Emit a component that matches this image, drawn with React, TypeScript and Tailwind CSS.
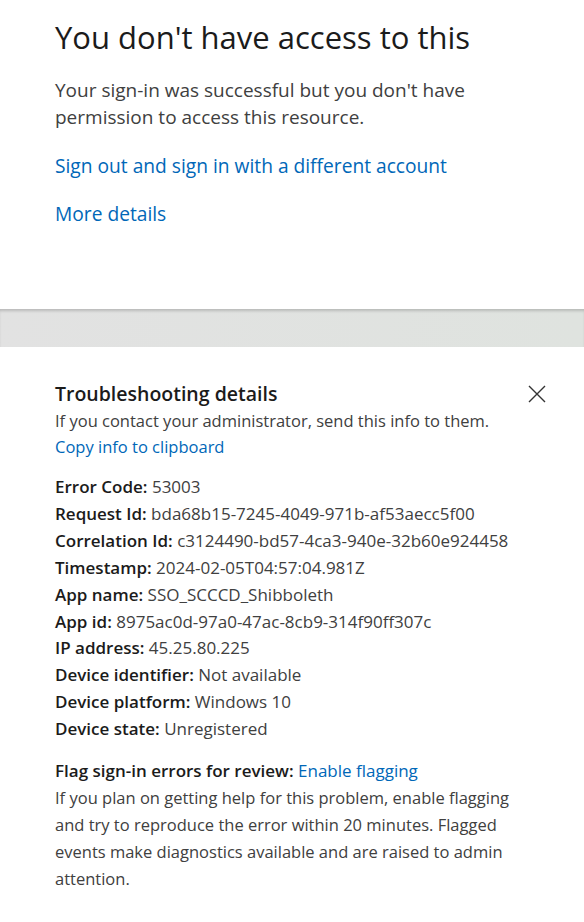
import * as React from "react";

const details: [string, string][] = [
	["Error Code:", "53003"],
	["Request Id:", "bda68b15-7245-4049-971b-af53aecc5f00"],
	["Correlation Id:", "c3124490-bd57-4ca3-940e-32b60e924458"],
	["Timestamp:", "2024-02-05T04:57:04.981Z"],
	["App name:", "SSO_SCCCD_Shibboleth"],
	["App id:", "8975ac0d-97a0-47ac-8cb9-314f90ff307c"],
	["IP address:", "45.25.80.225"],
	["Device identifier:", "Not available"],
	["Device platform:", "Windows 10"],
	["Device state:", "Unregistered"],
];

export default function App() {
	return (
		<div className="w-[584px] h-[922px] overflow-hidden bg-white font-['Segoe_UI','Open_Sans',sans-serif]">
			{/* Main card */}
			<div className="h-[309px] pl-[55px] pr-6 pt-[15px]">
				<h1 className="text-[31px] leading-[45px] font-medium text-[#1b1b1b]">
					You don't have access to this
				</h1>
				<p className="mt-[17px] text-[19px] leading-[27px] text-[#404040]">
					Your sign-in was successful but you don't have permission to access
					this resource.
				</p>
				<div className="mt-[21px] text-[19.2px] leading-[28px] text-[#0067b8]">
					Sign out and sign in with a different account
				</div>
				<div className="mt-[20px] text-[19.2px] leading-[28px] text-[#0067b8]">
					More details
				</div>
			</div>

			{/* Backdrop strip */}
			<div className="h-[38px] bg-gradient-to-r from-[#e2e2e2] to-[#dfe3df] shadow-[inset_0_3px_3px_-1px_rgba(0,0,0,0.18)]" />

			{/* Troubleshooting panel */}
			<div className="pl-[55px] pr-[38px] pt-[34px] text-[#1b1b1b]">
				<div className="flex items-start justify-between">
					<div className="text-[19.5px] leading-[26px] font-semibold">
						Troubleshooting details
					</div>
					<svg
						width="18"
						height="18"
						viewBox="0 0 18 18"
						className="mt-[4px]"
						fill="none"
						stroke="#333"
						strokeWidth="1.4"
					>
						<path d="M1 1L17 17M17 1L1 17" />
					</svg>
				</div>
				<div className="text-[16.5px] leading-[27px] text-[#404040]">
					If you contact your administrator, send this info to them.
				</div>
				<div className="-mt-[1px] text-[16.5px] leading-[27px] text-[#0067b8]">
					Copy info to clipboard
				</div>

				<div className="mt-[14px] text-[17px]">
					{details.map(([k, v]) => (
						<div key={k} className="leading-[26.9px] text-[#404040]">
							<span className="font-semibold text-[#1b1b1b]">{k}</span> {v}
						</div>
					))}
				</div>

				<div className="mt-[14px] text-[17px] leading-[27px]">
					<span className="font-semibold">Flag sign-in errors for review:</span>{" "}
					<span className="text-[#0067b8]">Enable flagging</span>
				</div>
				<p className="pr-[6px] text-[16.5px] leading-[27px] text-[#404040]">
					If you plan on getting help for this problem, enable flagging and try
					to reproduce the error within 20 minutes. Flagged events make
					diagnostics available and are raised to admin attention.
				</p>
			</div>
		</div>
	);
}
